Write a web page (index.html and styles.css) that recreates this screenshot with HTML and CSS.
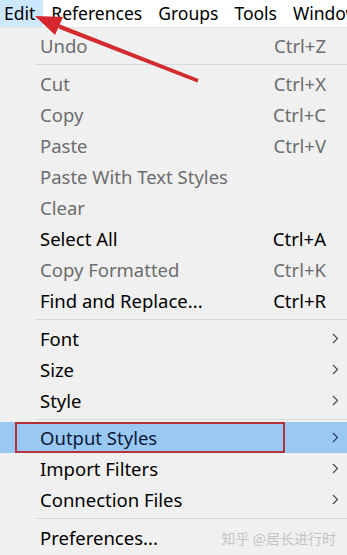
FILE: index.html
```html
<!DOCTYPE html>
<html>
<head>
<meta charset="utf-8">
<link rel="stylesheet" href="styles.css">
</head>
<body>
<div class="menubar">
  <span class="mb-item mb-active">Edit</span>
  <span class="mb-item">References</span>
  <span class="mb-item">Groups</span>
  <span class="mb-item">Tools</span>
  <span class="mb-item">Window</span>
</div>
<div class="menu">
  <div class="item disabled"><span class="label">Undo</span><span class="key">Ctrl+Z</span></div>
  <div class="sep"></div>
  <div class="item disabled"><span class="label">Cut</span><span class="key">Ctrl+X</span></div>
  <div class="item disabled"><span class="label">Copy</span><span class="key">Ctrl+C</span></div>
  <div class="item disabled"><span class="label">Paste</span><span class="key">Ctrl+V</span></div>
  <div class="item disabled"><span class="label">Paste With Text Styles</span></div>
  <div class="item disabled"><span class="label">Clear</span></div>
  <div class="item"><span class="label">Select All</span><span class="key">Ctrl+A</span></div>
  <div class="item disabled"><span class="label">Copy Formatted</span><span class="key">Ctrl+K</span></div>
  <div class="item"><span class="label">Find and Replace...</span><span class="key">Ctrl+R</span></div>
  <div class="sep"></div>
  <div class="item sub"><span class="label">Font</span><svg class="chev" width="7" height="11" viewBox="0 0 7 11"><polyline points="1,1 5.5,5.5 1,10" fill="none" stroke="#444" stroke-width="1.1"/></svg></div>
  <div class="item sub"><span class="label">Size</span><svg class="chev" width="7" height="11" viewBox="0 0 7 11"><polyline points="1,1 5.5,5.5 1,10" fill="none" stroke="#444" stroke-width="1.1"/></svg></div>
  <div class="item sub"><span class="label">Style</span><svg class="chev" width="7" height="11" viewBox="0 0 7 11"><polyline points="1,1 5.5,5.5 1,10" fill="none" stroke="#444" stroke-width="1.1"/></svg></div>
  <div class="sep sep-short"></div>
  <div class="item sub hl"><span class="label">Output Styles</span><svg class="chev" width="7" height="11" viewBox="0 0 7 11"><polyline points="1,1 5.5,5.5 1,10" fill="none" stroke="#2a3a5a" stroke-width="1.1"/></svg><div class="redbox"></div></div>
  <div class="item sub"><span class="label">Import Filters</span><svg class="chev" width="7" height="11" viewBox="0 0 7 11"><polyline points="1,1 5.5,5.5 1,10" fill="none" stroke="#444" stroke-width="1.1"/></svg></div>
  <div class="item sub"><span class="label">Connection Files</span><svg class="chev" width="7" height="11" viewBox="0 0 7 11"><polyline points="1,1 5.5,5.5 1,10" fill="none" stroke="#444" stroke-width="1.1"/></svg></div>
  <div class="sep"></div>
  <div class="item"><span class="label">Preferences...</span><span class="watermark">知乎 @居长进行时</span></div>
</div>
<svg class="arrow" width="347" height="100" viewBox="0 0 347 100">
  <polygon points="35,16 63,17 55,35" fill="#d8262c"/>
  <polygon points="55,22.5 59.5,29 197.5,82.5 198.5,79" fill="#d32a2f"/>
</svg>
</body>
</html>
```

FILE: styles.css
```css
html, body {
  margin: 0;
  padding: 0;
}
body {
  width: 347px;
  height: 555px;
  overflow: hidden;
  background: #f0f0f0;
  font-family: "Noto Sans", "Open Sans", sans-serif;
  position: relative;
}
.menubar {
  height: 27px;
  background: #ffffff;
  border-bottom: 1px solid #e6e6e6;
  display: flex;
  align-items: stretch;
  white-space: nowrap;
  overflow: hidden;
}
.mb-item {
  font-size: 17.5px;
  color: #000;
  padding: 0 8px 0 8px;
  line-height: 26px;
}
.mb-active {
  background: #cce8ff;
  padding: 0 8px 0 4px;
}
.menu {
  padding-top: 2px;
}
.item {
  position: relative;
  height: 31px;
  display: flex;
  align-items: center;
  padding: 0 21px 0 40px;
  font-size: 18.5px;
  color: #000;
  white-space: nowrap;
}
.item.disabled {
  color: #6d6d6d;
}
.label {
  flex: 1;
}
.key {
  text-align: right;
}
.sub {
  padding-right: 8px;
}
.chev {
  display: block;
}
.hl {
  background: #99c9f3;
  color: #0b1836;
}
.redbox {
  position: absolute;
  left: 15px;
  top: 0;
  width: 266px;
  height: 27px;
  border: 2px solid #b4303c;
}
.sep {
  height: 7px;
  display: flex;
  align-items: center;
  padding-left: 36px;
}
.sep::after {
  content: "";
  display: block;
  flex: 1;
  height: 1px;
  background: #d9d9d9;
}
.sep-short {
  height: 6px;
}
.watermark {
  font-family: "Noto Sans CJK SC", sans-serif;
  font-size: 14px;
  color: #c4c4c4;
  margin-right: -10px;
}
.arrow {
  position: absolute;
  left: 0;
  top: 0;
  pointer-events: none;
}
```
